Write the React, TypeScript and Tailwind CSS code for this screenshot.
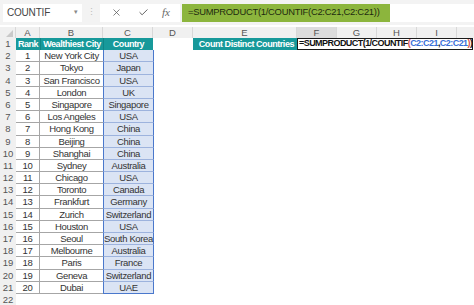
import { X, Check } from 'lucide-react';

const rows = [
  ['1', 'New York City', 'USA'],
  ['2', 'Tokyo', 'Japan'],
  ['3', 'San Francisco', 'USA'],
  ['4', 'London', 'UK'],
  ['5', 'Singapore', 'Singapore'],
  ['6', 'Los Angeles', 'USA'],
  ['7', 'Hong Kong', 'China'],
  ['8', 'Beijing', 'China'],
  ['9', 'Shanghai', 'China'],
  ['10', 'Sydney', 'Australia'],
  ['11', 'Chicago', 'USA'],
  ['12', 'Toronto', 'Canada'],
  ['13', 'Frankfurt', 'Germany'],
  ['14', 'Zurich', 'Switzerland'],
  ['15', 'Houston', 'USA'],
  ['16', 'Seoul', 'South Korea'],
  ['17', 'Melbourne', 'Australia'],
  ['18', 'Paris', 'France'],
  ['19', 'Geneva', 'Switzerland'],
  ['20', 'Dubai', 'UAE'],
];

const cols = [
  { l: 'A', w: 'w-[24px]' },
  { l: 'B', w: 'w-[63px]' },
  { l: 'C', w: 'w-[50px]' },
  { l: 'D', w: 'w-[40px]' },
  { l: 'E', w: 'w-[104px]' },
  { l: 'F', w: 'w-[40px]' },
  { l: 'G', w: 'w-[40px]' },
  { l: 'H', w: 'w-[40px]' },
  { l: 'I', w: 'w-[40px]' },
  { l: 'J', w: 'w-[40px]' },
];

export default function App() {
  return (
    <div className="w-[474px] h-[305px] overflow-hidden bg-white text-[#333] font-['Liberation_Sans',sans-serif]">
      {/* Formula bar */}
      <div className="flex items-center h-[25px] bg-[#f3f3f3] pl-[3px]">
        <div className="flex items-center justify-between w-[79px] h-[18px] bg-white pl-[4px] pr-[4px] text-[10px] tracking-[-0.2px] text-[#444]">
          <span>COUNTIF</span>
          <span className="text-[7px] text-[#888]">▾</span>
        </div>
        <div className="w-[18px] flex justify-center text-[9px] text-[#bbb] leading-none">⋮</div>
        <div className="flex items-center h-[18px] w-[80px] bg-white text-[#555]">
          <X size={11} strokeWidth={1.6} className="ml-[11px]" />
          <Check size={11} strokeWidth={2} className="ml-[16px]" />
          <span className="ml-[13px] text-[11px] italic font-['Liberation_Serif',serif] text-[#666]">fx</span>
        </div>
        <div className="flex items-center h-[18px] w-[208px] ml-[2px] bg-[#8cb53d] pl-[6px] text-[9.4px] tracking-[-0.25px] text-[#1e2a10] whitespace-nowrap overflow-hidden">
          =SUMPRODUCT(1/COUNTIF(C2:C21,C2:C21))
        </div>
        <div className="flex-1 h-[18px] bg-white" />
      </div>

      {/* Column headers */}
      <div className="flex h-[11px] mt-[2px] bg-[#f0f0f0] text-[9.5px] text-[#555] leading-[11px]">
        <div className="w-[16px] shrink-0 border-r border-[#d8d8d8] relative">
          <div className="absolute right-[2px] bottom-[1px] w-0 h-0 border-l-[7px] border-l-transparent border-b-[7px] border-b-[#c9c9c9]" />
        </div>
        {cols.map((c) => (
          <div
            key={c.l}
            className={`${c.w} shrink-0 text-center border-r border-[#d8d8d8] ${c.l === 'F' ? 'bg-[#dcdcdc]' : ''}`}
          >
            {c.l}
          </div>
        ))}
      </div>

      {/* Row 1 */}
      <div className="flex h-[12.2px] text-[9px] tracking-[-0.45px] leading-[12px] whitespace-nowrap">
        <div className="w-[16px] shrink-0 bg-[#f0f0f0] text-center text-[9.5px] tracking-normal text-[#555]">1</div>
        <div className="w-[24px] shrink-0 bg-[#17999a] text-white font-bold text-center">Rank</div>
        <div className="w-[63px] shrink-0 bg-[#17999a] text-white font-bold text-center border-l border-[#0f8586]">Wealthiest City</div>
        <div className="w-[50px] shrink-0 bg-[#17999a] text-white font-bold text-center border-l border-[#0f8586]">Country</div>
        <div className="w-[40px] shrink-0 bg-white" />
        <div className="w-[104px] shrink-0 bg-[#17999a] text-white font-bold text-right pr-[3px]">Count Distinct Countries</div>
        <div className="flex-1 overflow-hidden bg-white border-[1.5px] border-[#1a1a1a] font-bold text-[9px] tracking-[-0.55px] text-[#111] leading-[9.5px] pl-[1px] mr-[1px]">
          =SUMPRODUCT(1/COUNTIF<span className="text-[#d9534f]">(</span>
          <span className="text-[#3a6fd8]">C2:C21</span>,<span className="text-[#3a6fd8]">C2:C21</span>
          <span className="text-[#d9534f]">)</span>)
        </div>
      </div>

      {/* Data rows */}
      {rows.map((r, i) => (
        <div key={i} className="flex h-[12.2px] text-[9.5px] tracking-[-0.35px] leading-[12px] whitespace-nowrap">
          <div className="w-[16px] shrink-0 bg-[#f0f0f0] text-center tracking-normal text-[#555]">{i + 2}</div>
          <div className="w-[24px] shrink-0 text-center border-b border-r border-[#a6a6a6]">{r[0]}</div>
          <div className="w-[63px] shrink-0 text-center border-b border-[#a6a6a6]">{r[1]}</div>
          <div
            className={`w-[51px] shrink-0 text-center bg-[#dbe4f4] border-x-[1.5px] border-x-[#4a78cc] border-b ${
              i === rows.length - 1 ? 'border-b-[1.5px] border-b-[#4a78cc]' : 'border-b-[#9db3dd]'
            }`}
          >
            {r[2]}
          </div>
        </div>
      ))}

      {/* Row 22 */}
      <div className="flex h-[12.2px]">
        <div className="w-[16px] shrink-0 bg-[#f0f0f0] text-center text-[9.5px] leading-[12px] text-[#555]">22</div>
      </div>
    </div>
  );
}
